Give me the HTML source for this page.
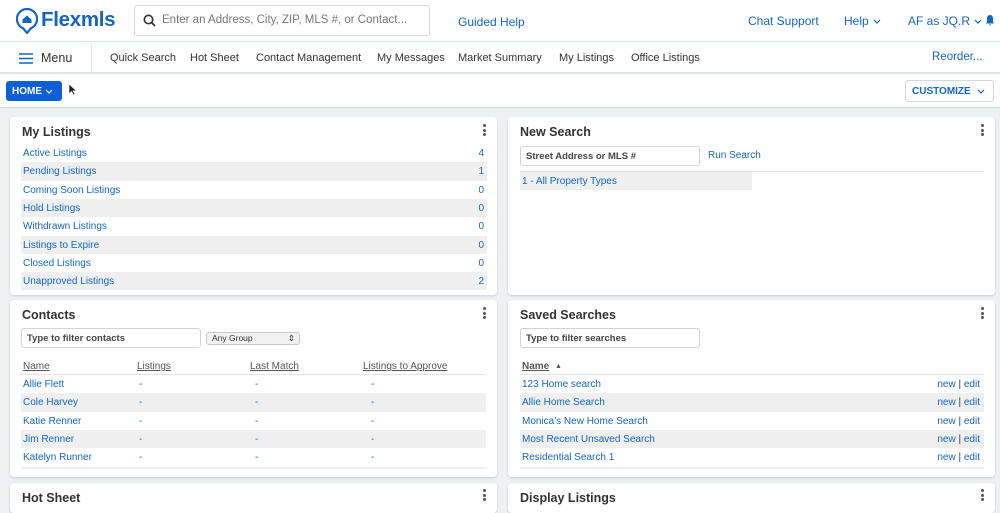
<!DOCTYPE html><html><head><style>
*{box-sizing:border-box;margin:0;padding:0}
body{width:1000px;height:507px;overflow:hidden;font-family:"Liberation Sans",sans-serif;background:#eef0f2;position:relative;color:#333}
.a{position:absolute}
.top{left:0;top:0;width:1000px;height:42px;background:#fff;border-bottom:1px solid #dde3ea}
.nav{left:0;top:42px;width:1000px;height:32px;background:#fff;border-bottom:2px solid #dfe5ec}
.bar{left:0;top:74px;width:1000px;height:34px;background:#fff;border-bottom:1px solid #d8dee6}
.b{color:#1565c0}
.nv{font-size:11px;color:#333;top:52px}
.p{background:#fff;border-radius:4px;box-shadow:0 1px 2px #c9ced4}
.t{font-size:12.5px;font-weight:bold;color:#333}
.dots{width:3px}
.dots i{display:block;width:3px;height:3px;border-radius:50%;background:#555;margin-bottom:1.5px}
.row{position:absolute;height:18.3px;font-size:10px;line-height:20px;color:#1565c0}
.s{background:#efefef}
.in{border:1px solid #d0d4d9;border-radius:3px;font-size:9.5px;font-weight:bold;color:#444;padding-left:5px;background:#fff;display:flex;align-items:center}
.cv{display:inline-block;vertical-align:middle;margin-left:4px}
</style></head><body>
<div class="a top"></div>
<svg class="a" style="left:16px;top:8px" width="22" height="26" viewBox="0 0 22 26"><path d="M11 1a10 10 0 0 0-4 19.2L11 25l4-4.8A10 10 0 0 0 11 1z" fill="none" stroke="#1565c0" stroke-width="2.2"/><path d="M6.5 11.5L11 7.5l4.5 4V15h-9z" fill="#1565c0"/></svg>
<div class="a b" style="left:41px;top:8px;font-size:20.5px;font-weight:bold;letter-spacing:-0.3px">Flexmls</div>
<div class="a" style="left:134px;top:5px;width:296px;height:31px;border:1px solid #d3d8de;border-radius:3px"></div>
<svg class="a" style="left:143px;top:14px" width="13" height="13"><circle cx="5.5" cy="5.5" r="4.2" fill="none" stroke="#333" stroke-width="1.6"/><path d="M8.5 8.5l3.5 3.5" stroke="#333" stroke-width="1.8"/></svg>
<div class="a" style="left:162px;top:14px;font-size:11.5px;color:#777">Enter an Address, City, ZIP, MLS #, or Contact...</div>
<div class="a b" style="left:458px;top:15px;font-size:12px">Guided Help</div>
<div class="a b" style="left:748px;top:14px;font-size:12px">Chat Support</div>
<div class="a b" style="left:844px;top:14px;font-size:12px">Help<svg class="cv" width="8" height="5"><path d="M1 1l3 3 3-3" fill="none" stroke="#1565c0" stroke-width="1.2"/></svg></div>
<div class="a b" style="left:908px;top:14px;font-size:12px">AF as JQ.R<svg class="cv" width="8" height="5"><path d="M1 1l3 3 3-3" fill="none" stroke="#1565c0" stroke-width="1.2"/></svg></div>
<svg class="a" style="left:985px;top:14px" width="10" height="12"><path d="M5 1C2.5 1 2 3 2 5v3L1 9.5h8L8 8V5C8 3 7.5 1 5 1z M4 10.5h2a1 1 0 0 1-2 0" fill="#1565c0"/></svg>
<div class="a nav"></div>
<div class="a" style="left:91px;top:43px;width:1px;height:30px;background:#dfe5ec"></div>
<svg class="a" style="left:19px;top:53px" width="14" height="11"><path d="M0 1h14M0 5.5h14M0 10h14" stroke="#1565c0" stroke-width="1.6"/></svg>
<div class="a" style="left:41px;top:51px;font-size:12.5px;color:#333">Menu</div>
<div class="a nv" style="left:110px">Quick Search</div>
<div class="a nv" style="left:190px">Hot Sheet</div>
<div class="a nv" style="left:256px">Contact Management</div>
<div class="a nv" style="left:377px">My Messages</div>
<div class="a nv" style="left:458px">Market Summary</div>
<div class="a nv" style="left:559px">My Listings</div>
<div class="a nv" style="left:631px">Office Listings</div>
<div class="a b" style="left:932px;top:51px;font-size:11.5px">Reorder...</div>
<div class="a bar"></div>
<div class="a" style="left:6px;top:81px;width:56px;height:20px;background:#0d5fd8;border-radius:3px;color:#fff;font-size:10px;font-weight:bold;line-height:21px;padding-left:6px">HOME<svg class="cv" width="8" height="5" style="margin-left:3px"><path d="M1 1l3 3 3-3" fill="none" stroke="#fff" stroke-width="1.2"/></svg></div>
<svg class="a" style="left:68px;top:83px" width="9" height="13"><path d="M1 1v10l2.5-2.5 2 3.5 1.5-.8-2-3.3H8.5z" fill="#222" stroke="#fff" stroke-width=".6"/></svg>
<div class="a b" style="left:905px;top:80px;width:89px;height:22px;border:1px solid #d3d8de;border-radius:3px;font-size:10px;font-weight:bold;line-height:21px;padding-left:6px">CUSTOMIZE<svg class="cv" width="8" height="5" style="margin-left:6px"><path d="M1 1l3 3 3-3" fill="none" stroke="#1565c0" stroke-width="1.2"/></svg></div>

<div class="a p" style="left:10px;top:117px;width:487px;height:178px"></div>
<div class="a t" style="left:22px;top:125px">My Listings</div>
<div class="a dots" style="left:483px;top:124px"><i></i><i></i><i></i></div>
<div class="row" style="left:21px;top:144px;width:466px"><span style="padding-left:2px">Active Listings</span><span style="float:right;padding-right:3px">4</span></div>
<div class="row s" style="left:21px;top:162.3px;width:466px"><span style="padding-left:2px">Pending Listings</span><span style="float:right;padding-right:3px">1</span></div>
<div class="row" style="left:21px;top:180.6px;width:466px"><span style="padding-left:2px">Coming Soon Listings</span><span style="float:right;padding-right:3px">0</span></div>
<div class="row s" style="left:21px;top:198.9px;width:466px"><span style="padding-left:2px">Hold Listings</span><span style="float:right;padding-right:3px">0</span></div>
<div class="row" style="left:21px;top:217.2px;width:466px"><span style="padding-left:2px">Withdrawn Listings</span><span style="float:right;padding-right:3px">0</span></div>
<div class="row s" style="left:21px;top:235.5px;width:466px"><span style="padding-left:2px">Listings to Expire</span><span style="float:right;padding-right:3px">0</span></div>
<div class="row" style="left:21px;top:253.8px;width:466px"><span style="padding-left:2px">Closed Listings</span><span style="float:right;padding-right:3px">0</span></div>
<div class="row s" style="left:21px;top:272.1px;width:466px"><span style="padding-left:2px">Unapproved Listings</span><span style="float:right;padding-right:3px">2</span></div>

<div class="a p" style="left:508px;top:117px;width:487px;height:178px"></div>
<div class="a t" style="left:520px;top:125px">New Search</div>
<div class="a dots" style="left:981px;top:124px"><i></i><i></i><i></i></div>
<div class="a in" style="left:520px;top:146px;width:180px;height:20px">Street Address or MLS #</div>
<div class="a b" style="left:708px;top:150px;font-size:10px">Run Search</div>
<div class="a" style="left:520px;top:171px;width:464px;height:1px;background:#e3e3e3"></div>
<div class="row s" style="left:520px;top:172px;width:232px;padding-left:2px">1 - All Property Types</div>

<div class="a p" style="left:10px;top:300px;width:487px;height:177px"></div>
<div class="a t" style="left:22px;top:308px">Contacts</div>
<div class="a dots" style="left:483px;top:307px"><i></i><i></i><i></i></div>
<div class="a in" style="left:21px;top:328px;width:180px;height:20px">Type to filter contacts</div>
<div class="a" style="left:206px;top:332px;width:94px;height:13px;border:1px solid #c6cad0;border-radius:3px;background:#f2f2f2;font-size:8.5px;line-height:11px;padding-left:5px">Any Group<span style="float:right;padding-right:4px">&#8661;</span></div>
<div class="a" style="left:23px;top:361px;font-size:10px;color:#555;text-decoration:underline">Name</div>
<div class="a" style="left:137px;top:361px;font-size:10px;color:#555;text-decoration:underline">Listings</div>
<div class="a" style="left:250px;top:361px;font-size:10px;color:#555;text-decoration:underline">Last Match</div>
<div class="a" style="left:363px;top:361px;font-size:10px;color:#555;text-decoration:underline">Listings to Approve</div>
<div class="a" style="left:21px;top:374px;width:465px;height:1px;background:#e3e3e3"></div>
<div class="row" style="left:21px;top:375px;width:465px"><span class="a" style="left:2px">Allie Flett</span><span class="a" style="left:118px">-</span><span class="a" style="left:234px">-</span><span class="a" style="left:350px">-</span></div>
<div class="row s" style="left:21px;top:393.3px;width:465px"><span class="a" style="left:2px">Cole Harvey</span><span class="a" style="left:118px">-</span><span class="a" style="left:234px">-</span><span class="a" style="left:350px">-</span></div>
<div class="row" style="left:21px;top:411.6px;width:465px"><span class="a" style="left:2px">Katie Renner</span><span class="a" style="left:118px">-</span><span class="a" style="left:234px">-</span><span class="a" style="left:350px">-</span></div>
<div class="row s" style="left:21px;top:429.9px;width:465px"><span class="a" style="left:2px">Jim Renner</span><span class="a" style="left:118px">-</span><span class="a" style="left:234px">-</span><span class="a" style="left:350px">-</span></div>
<div class="row" style="left:21px;top:448.2px;width:465px"><span class="a" style="left:2px">Katelyn Runner</span><span class="a" style="left:118px">-</span><span class="a" style="left:234px">-</span><span class="a" style="left:350px">-</span></div>
<div class="a" style="left:21px;top:467px;width:465px;height:2px;background:#efefef"></div>

<div class="a p" style="left:508px;top:300px;width:487px;height:177px"></div>
<div class="a t" style="left:520px;top:308px">Saved Searches</div>
<div class="a dots" style="left:981px;top:307px"><i></i><i></i><i></i></div>
<div class="a in" style="left:520px;top:328px;width:180px;height:20px">Type to filter searches</div>
<div class="a" style="left:522px;top:361px;font-size:10px;color:#555;font-weight:bold;text-decoration:underline">Name</div><div class="a" style="left:555px;top:363px;font-size:7px;color:#555">&#9650;</div>
<div class="a" style="left:520px;top:374px;width:464px;height:1px;background:#e3e3e3"></div>
<div class="row" style="left:520px;top:375px;width:464px"><span style="padding-left:2px">123 Home search</span><span style="float:right;padding-right:4px">new <span style="color:#333">|</span> edit</span></div>
<div class="row s" style="left:520px;top:393.3px;width:464px"><span style="padding-left:2px">Allie Home Search</span><span style="float:right;padding-right:4px">new <span style="color:#333">|</span> edit</span></div>
<div class="row" style="left:520px;top:411.6px;width:464px"><span style="padding-left:2px">Monica's New Home Search</span><span style="float:right;padding-right:4px">new <span style="color:#333">|</span> edit</span></div>
<div class="row s" style="left:520px;top:429.9px;width:464px"><span style="padding-left:2px">Most Recent Unsaved Search</span><span style="float:right;padding-right:4px">new <span style="color:#333">|</span> edit</span></div>
<div class="row" style="left:520px;top:448.2px;width:464px"><span style="padding-left:2px">Residential Search 1</span><span style="float:right;padding-right:4px">new <span style="color:#333">|</span> edit</span></div>
<div class="a" style="left:520px;top:467px;width:464px;height:2px;background:#efefef"></div>

<div class="a p" style="left:10px;top:483px;width:487px;height:30px"></div>
<div class="a t" style="left:22px;top:491px">Hot Sheet</div>
<div class="a dots" style="left:483px;top:489px"><i></i><i></i><i></i></div>
<div class="a p" style="left:508px;top:483px;width:487px;height:30px"></div>
<div class="a t" style="left:520px;top:491px">Display Listings</div>
<div class="a dots" style="left:981px;top:489px"><i></i><i></i><i></i></div>
</body></html>
